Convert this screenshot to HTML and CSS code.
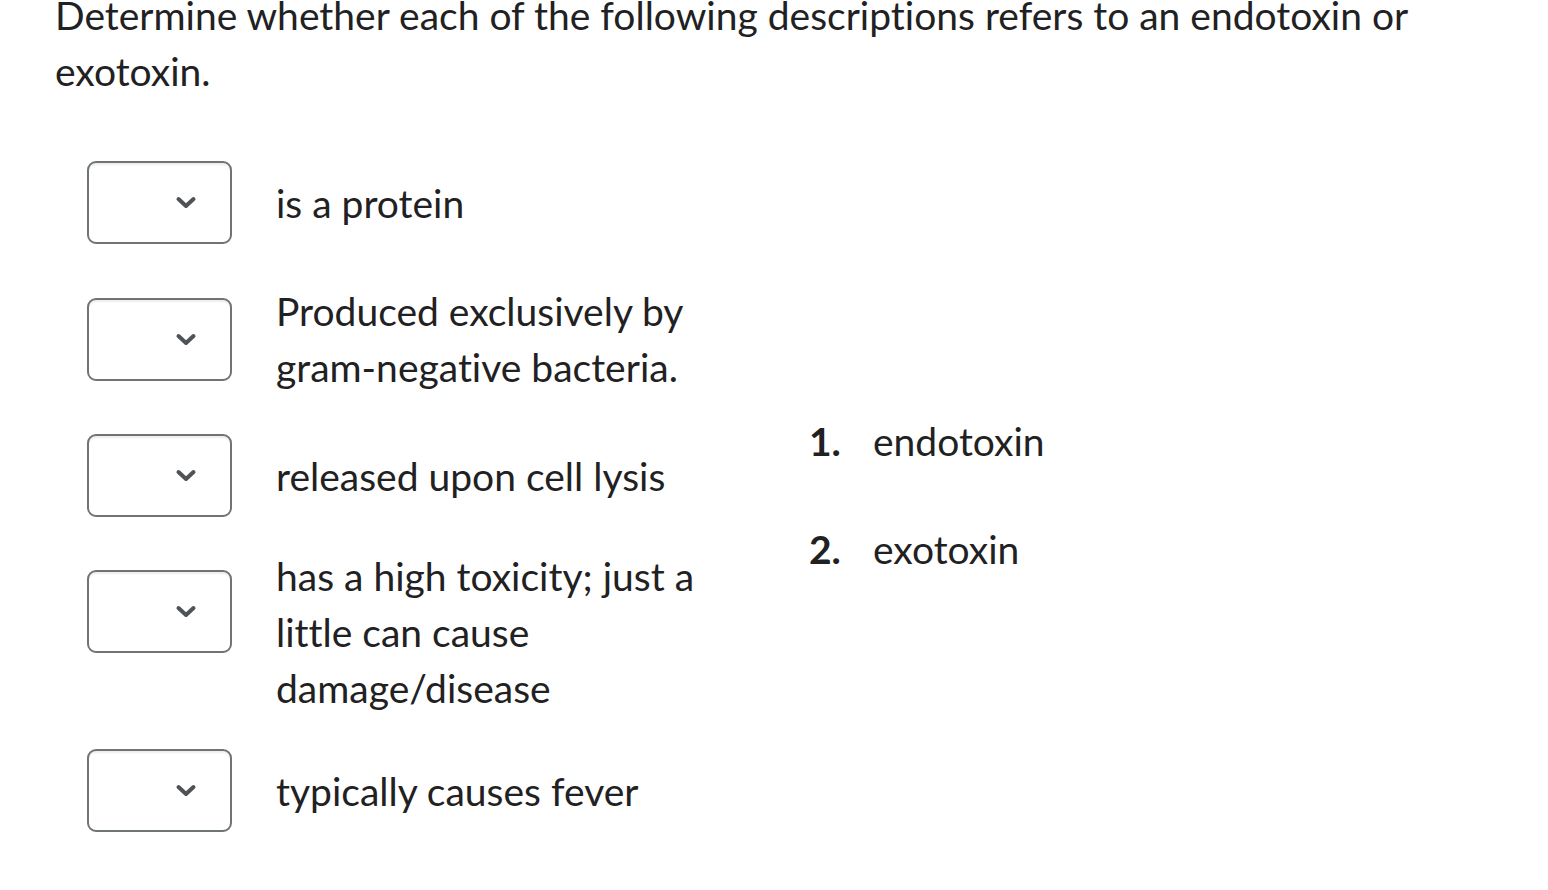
FILE: index.html
```html
<!DOCTYPE html>
<html lang="en">
<head>
<meta charset="utf-8">
<title>Endotoxin or exotoxin</title>
<link rel="stylesheet" href="styles.css">
</head>
<body>
<main class="question">
  <p class="prompt">Determine whether each of the following descriptions refers to an endotoxin or exotoxin.</p>
  <div class="matching">
    <ul class="pairs">
      <li class="pair">
        <div class="select" role="combobox" aria-label="Match for: is a protein">
          <svg class="chevron" viewBox="0 0 22 13" aria-hidden="true"><path d="M3.5 3 L11 10 L18.5 3"/></svg>
        </div>
        <span class="desc">is a protein</span>
      </li>
      <li class="pair">
        <div class="select" role="combobox" aria-label="Match for: Produced exclusively by gram-negative bacteria.">
          <svg class="chevron" viewBox="0 0 22 13" aria-hidden="true"><path d="M3.5 3 L11 10 L18.5 3"/></svg>
        </div>
        <span class="desc">Produced exclusively by gram-negative bacteria.</span>
      </li>
      <li class="pair">
        <div class="select" role="combobox" aria-label="Match for: released upon cell lysis">
          <svg class="chevron" viewBox="0 0 22 13" aria-hidden="true"><path d="M3.5 3 L11 10 L18.5 3"/></svg>
        </div>
        <span class="desc">released upon cell lysis</span>
      </li>
      <li class="pair pair--long">
        <div class="select" role="combobox" aria-label="Match for: has a high toxicity">
          <svg class="chevron" viewBox="0 0 22 13" aria-hidden="true"><path d="M3.5 3 L11 10 L18.5 3"/></svg>
        </div>
        <span class="desc">has a high toxicity; just a little can cause damage/disease</span>
      </li>
      <li class="pair">
        <div class="select" role="combobox" aria-label="Match for: typically causes fever">
          <svg class="chevron" viewBox="0 0 22 13" aria-hidden="true"><path d="M3.5 3 L11 10 L18.5 3"/></svg>
        </div>
        <span class="desc">typically causes fever</span>
      </li>
    </ul>
    <ol class="choices">
      <li class="choice"><span class="num">1.</span><span>endotoxin</span></li>
      <li class="choice"><span class="num">2.</span><span>exotoxin</span></li>
    </ol>
  </div>
</main>
</body>
</html>
```

FILE: styles.css
```css
html, body {
  margin: 0;
  padding: 0;
  background: #ffffff;
}

body {
  font-family: Lato, "Noto Sans", sans-serif;
  font-size: 39px;
  line-height: 56px;
  color: #1f2122;
  font-variant-ligatures: none;
}

.question {
  padding: 0 40px 0 55px;
  width: 1440px;
}

.prompt {
  margin: -13px 0 0;
}

.matching {
  display: flex;
  align-items: center;
  margin-top: 48px;
  padding-left: 32px;
}

.pairs {
  list-style: none;
  margin: 0;
  padding: 0;
  display: flex;
  flex-direction: column;
  gap: 25px;
}

.pair {
  display: flex;
  align-items: center;
  min-height: 111px;
}

/* three-line description: dropdown stays near the top of the row */
.pair--long {
  align-items: flex-start;
  margin: -8px 0 -6px;
}

.pair--long .select {
  margin-top: 22px;
}

.select {
  flex: none;
  box-sizing: border-box;
  width: 145px;
  height: 83px;
  border: 2px solid #6f7477;
  border-radius: 9px;
  background: #ffffff;
  box-shadow: inset 0 3px 2px -1px rgba(0, 0, 0, 0.07);
  display: flex;
  align-items: center;
  justify-content: flex-end;
  padding-right: 33px;
}

.chevron {
  width: 22px;
  height: 13px;
  fill: none;
  stroke: #4f5355;
  stroke-width: 4;
  stroke-linecap: round;
  stroke-linejoin: round;
}

.desc {
  width: 440px;
  margin-left: 44px;
}

.choices {
  list-style: none;
  margin: -4px 0 0 93px;
  padding: 0;
  display: flex;
  flex-direction: column;
  gap: 52px;
}

.choice {
  display: flex;
}

.num {
  width: 64px;
  font-weight: 700;
}
```
